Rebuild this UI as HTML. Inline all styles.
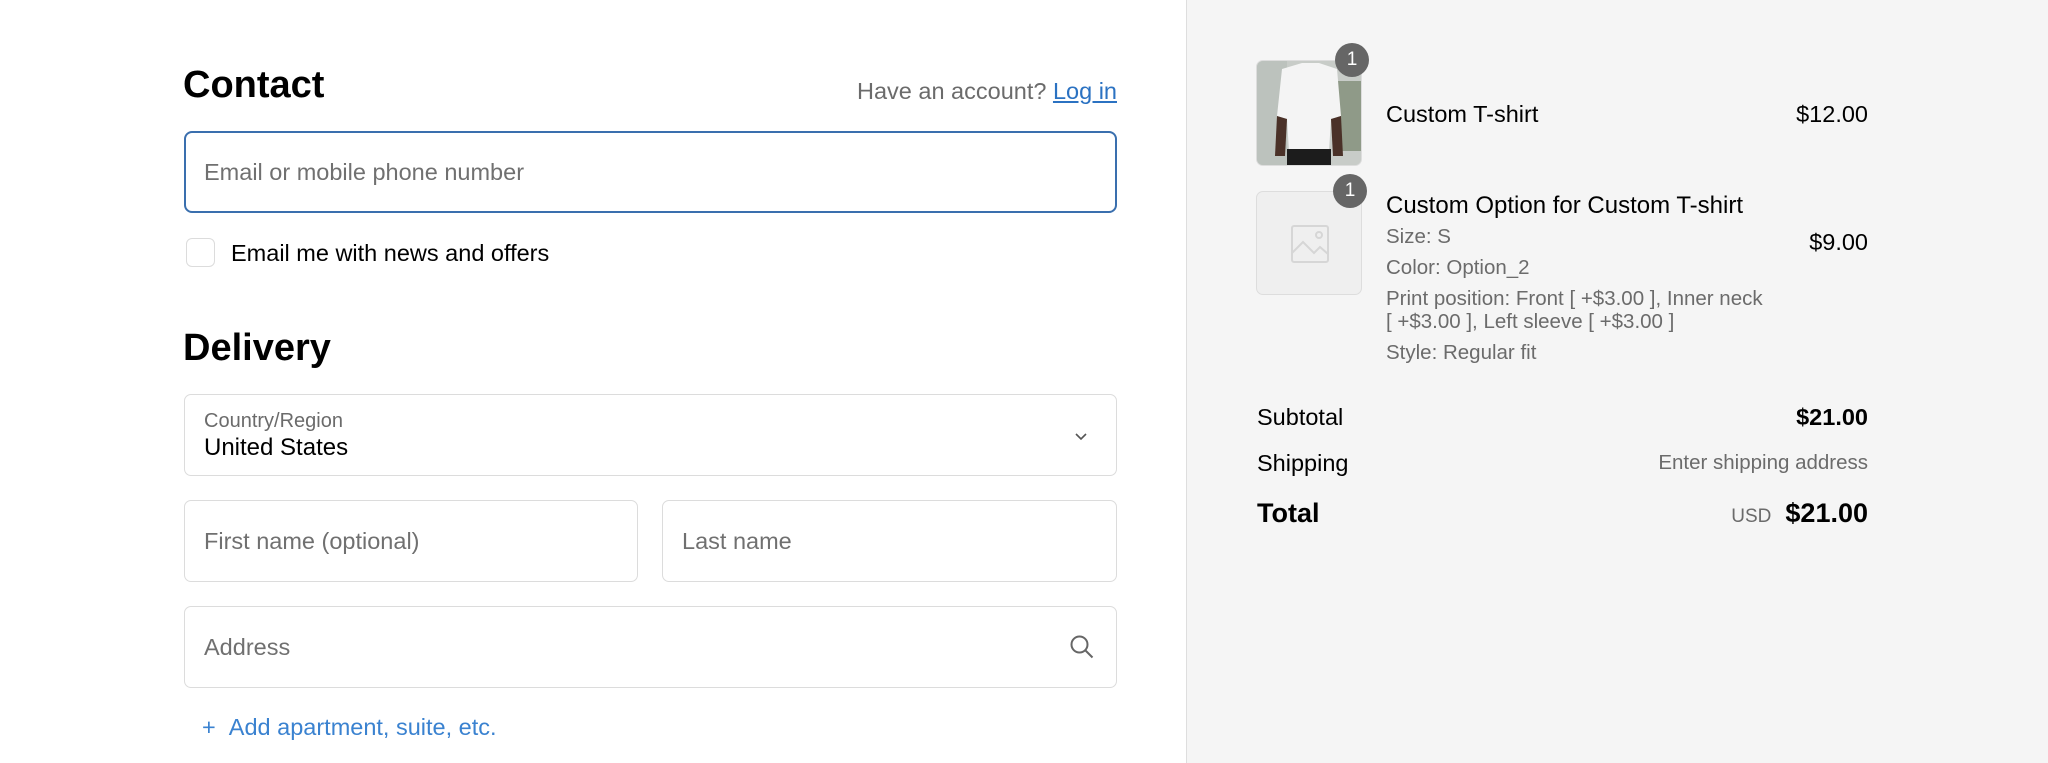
<!DOCTYPE html>
<html><head><meta charset="utf-8"><style>
*{margin:0;padding:0;box-sizing:border-box}
body{width:2048px;height:763px;overflow:hidden;background:#fff;font-family:"Liberation Sans",Arial,sans-serif;color:#000;position:relative}
.a{position:absolute;white-space:nowrap}
.right{position:absolute;left:1186px;top:0;width:862px;height:763px;background:#f5f5f5;border-left:1px solid #dedede}
.box{position:absolute;border:1px solid #dcdcdc;border-radius:7px;background:#fff}
.ph{color:#707070;font-size:23.5px;line-height:28px}
.t{font-size:23.5px;line-height:28px}
.g{color:#6b6b6b;font-size:20.5px;line-height:24px}
.badge{position:absolute;width:34px;height:34px;border-radius:50%;background:#666;color:#fff;font-size:19px;line-height:34px;text-align:center}
</style></head><body>
<div class="a" style="left:183px;top:63px;font-size:38px;font-weight:bold;line-height:44px">Contact</div>
<div class="a" style="right:931px;top:77px;font-size:23.5px;line-height:28px;color:#6b6b6b">Have an account? <span style="color:#2b72c2;text-decoration:underline">Log in</span></div>
<div class="box" style="left:184px;top:131px;width:933px;height:82px;border:2.5px solid #3a6fae;border-radius:8px"></div>
<div class="a ph" style="left:204px;top:158px">Email or mobile phone number</div>
<div class="box" style="left:186px;top:238px;width:29px;height:29px;border-radius:6px"></div>
<div class="a t" style="left:231px;top:239px">Email me with news and offers</div>
<div class="a" style="left:183px;top:326px;font-size:38px;font-weight:bold;line-height:44px">Delivery</div>
<div class="box" style="left:184px;top:394px;width:933px;height:82px"></div>
<div class="a" style="left:204px;top:410px;font-size:20px;line-height:23px;color:#6b6b6b">Country/Region</div>
<div class="a" style="left:204px;top:434px;font-size:24px;line-height:28px">United States</div>
<svg class="a" style="left:1074px;top:432px" width="14" height="10" viewBox="0 0 14 10"><path d="M2 2l5 5 5-5" fill="none" stroke="#555" stroke-width="1.6"/></svg>
<div class="box" style="left:184px;top:500px;width:454px;height:82px"></div>
<div class="a ph" style="left:204px;top:527px">First name (optional)</div>
<div class="box" style="left:662px;top:500px;width:455px;height:82px"></div>
<div class="a ph" style="left:682px;top:527px">Last name</div>
<div class="box" style="left:184px;top:606px;width:933px;height:82px"></div>
<div class="a ph" style="left:204px;top:633px">Address</div>
<svg class="a" style="left:1069px;top:634px" width="26" height="26" viewBox="0 0 26 26"><circle cx="10.5" cy="10.5" r="8" fill="none" stroke="#666" stroke-width="2"/><path d="M16.5 16.5l7 7" stroke="#666" stroke-width="2"/></svg>
<div class="a" style="left:202px;top:713px;font-size:23.5px;line-height:28px;color:#3a82d0">+&nbsp;&nbsp;Add apartment, suite, etc.</div>

<div class="right"></div>
<div class="a" style="left:1256px;top:60px;width:106px;height:106px;border-radius:7px;overflow:hidden;border:1px solid #ddd;background:#cfd3d0">
<svg width="106" height="106" viewBox="0 0 106 106"><rect width="106" height="106" fill="#c8ccc8"/><rect x="0" y="0" width="30" height="106" fill="#bcc2bd"/><rect x="80" y="20" width="26" height="70" fill="#8f9a88"/><path d="M25 8 L45 2 L62 2 L80 8 L84 55 L74 58 L72 90 L32 90 L30 58 L20 55 Z" fill="#f4f4f4"/><rect x="30" y="88" width="44" height="18" fill="#1c1c1c"/><path d="M20 55 L30 58 L28 95 L18 95Z" fill="#4a3128"/><path d="M84 55 L74 58 L76 95 L86 95Z" fill="#4a3128"/></svg></div>
<div class="badge" style="left:1335px;top:43px">1</div>
<div class="a t" style="left:1386px;top:100px">Custom T-shirt</div>
<div class="a t" style="right:180px;top:100px">$12.00</div>
<div class="a" style="left:1256px;top:191px;width:106px;height:104px;border-radius:7px;border:1px solid #ddd;background:#efefef">
<svg style="position:absolute;left:32px;top:31px" width="42" height="42" viewBox="0 0 42 42"><rect x="3" y="3" width="36" height="36" rx="2" fill="none" stroke="#d6d6d6" stroke-width="2"/><path d="M3 30 L14 19 L25 30 L31 24 L39 31" fill="none" stroke="#d6d6d6" stroke-width="2"/><circle cx="30" cy="12" r="3" fill="none" stroke="#d6d6d6" stroke-width="2"/></svg></div>
<div class="badge" style="left:1333px;top:174px">1</div>
<div class="a" style="left:1386px;top:192px;font-size:24px;line-height:28px">Custom Option for Custom T-shirt</div>
<div class="a g" style="left:1386px;top:225px">Size: S</div>
<div class="a g" style="left:1386px;top:256px">Color: Option_2</div>
<div class="a g" style="left:1386px;top:287px">Print position: Front [ +$3.00 ], Inner neck</div>
<div class="a g" style="left:1386px;top:310px">[ +$3.00 ], Left sleeve [ +$3.00 ]</div>
<div class="a g" style="left:1386px;top:341px">Style: Regular fit</div>
<div class="a t" style="right:180px;top:228px">$9.00</div>
<div class="a t" style="left:1257px;top:403px">Subtotal</div>
<div class="a t" style="right:180px;top:403px;font-weight:bold">$21.00</div>
<div class="a t" style="left:1257px;top:449px">Shipping</div>
<div class="a g" style="right:180px;top:451px">Enter shipping address</div>
<div class="a" style="left:1257px;top:496px;font-size:27px;line-height:34px;font-weight:bold">Total</div>
<div class="a" style="right:180px;top:496px;font-size:27px;line-height:34px;font-weight:bold"><span style="font-size:19px;font-weight:normal;color:#6b6b6b;margin-right:14px">USD</span>$21.00</div>
</body></html>
